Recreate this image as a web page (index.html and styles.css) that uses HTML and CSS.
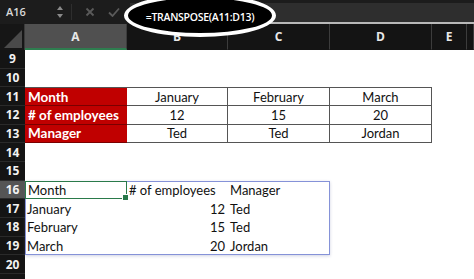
FILE: index.html
```html
<!DOCTYPE html>
<html lang="en">
<head>
    <meta charset="UTF-8">
    <title>TRANSPOSE</title>
    <link rel="stylesheet" href="styles.css">
</head>
<body>

<div class="toolbar">
    <div class="namebox">A16</div>
    <div class="stepper">
        <svg width="8" height="14" viewBox="0 0 8 14"><path d="M1 5 L4 1 L7 5 Z M1 9 L4 13 L7 9 Z" fill="#8a8a8a"/></svg>
    </div>
    <div class="sep"></div>
    <div class="tool-icon">
        <svg width="10" height="10" viewBox="0 0 10 10"><path d="M1.5 1.5 L8.5 8.5 M8.5 1.5 L1.5 8.5" stroke="#5a5a5a" stroke-width="1.8"/></svg>
    </div>
    <div class="tool-icon">
        <svg width="12" height="10" viewBox="0 0 12 10"><path d="M1 5.5 L4.5 9 L11 1.5" stroke="#5a5a5a" stroke-width="1.8" fill="none"/></svg>
    </div>
    <div class="formula">
        <div class="ellipse">=TRANSPOSE(A11:D13)</div>
    </div>
</div>

<div class="sheet">
    <div class="corner"><div class="tri"></div></div>
    <div class="colhead active">A</div>
    <div class="colhead">B</div>
    <div class="colhead">C</div>
    <div class="colhead">D</div>
    <div class="colhead">E</div>
    <div class="colhead"></div>

    <div class="rowhead" style="grid-row: 2">9</div>
    <div class="rowhead" style="grid-row: 3">10</div>
    <div class="rowhead" style="grid-row: 4">11</div>
    <div class="rowhead" style="grid-row: 5">12</div>
    <div class="rowhead" style="grid-row: 6">13</div>
    <div class="rowhead" style="grid-row: 7">14</div>
    <div class="rowhead" style="grid-row: 8">15</div>
    <div class="rowhead active" style="grid-row: 9">16</div>
    <div class="rowhead" style="grid-row: 10">17</div>
    <div class="rowhead" style="grid-row: 11">18</div>
    <div class="rowhead" style="grid-row: 12">19</div>
    <div class="rowhead" style="grid-row: 13">20</div>
    <div class="rowhead" style="grid-row: 14"></div>

    <!-- source table -->
    <div class="cell red top" style="grid-row: 4; grid-column: 2">Month</div>
    <div class="cell boxed top" style="grid-row: 4; grid-column: 3">January</div>
    <div class="cell boxed top" style="grid-row: 4; grid-column: 4">February</div>
    <div class="cell boxed top" style="grid-row: 4; grid-column: 5">March</div>

    <div class="cell red" style="grid-row: 5; grid-column: 2"># of employees</div>
    <div class="cell boxed" style="grid-row: 5; grid-column: 3">12</div>
    <div class="cell boxed" style="grid-row: 5; grid-column: 4">15</div>
    <div class="cell boxed" style="grid-row: 5; grid-column: 5">20</div>

    <div class="cell red" style="grid-row: 6; grid-column: 2">Manager</div>
    <div class="cell boxed" style="grid-row: 6; grid-column: 3">Ted</div>
    <div class="cell boxed" style="grid-row: 6; grid-column: 4">Ted</div>
    <div class="cell boxed" style="grid-row: 6; grid-column: 5">Jordan</div>

    <!-- transposed result -->
    <div class="spill" style="grid-row: 9 / 13; grid-column: 2 / 5"></div>
    <div class="cell plain selected" style="grid-row: 9; grid-column: 2">Month<span class="handle"></span></div>
    <div class="cell plain" style="grid-row: 9; grid-column: 3"># of employees</div>
    <div class="cell plain" style="grid-row: 9; grid-column: 4">Manager</div>

    <div class="cell plain" style="grid-row: 10; grid-column: 2">January</div>
    <div class="cell plain num" style="grid-row: 10; grid-column: 3">12</div>
    <div class="cell plain" style="grid-row: 10; grid-column: 4">Ted</div>

    <div class="cell plain" style="grid-row: 11; grid-column: 2">February</div>
    <div class="cell plain num" style="grid-row: 11; grid-column: 3">15</div>
    <div class="cell plain" style="grid-row: 11; grid-column: 4">Ted</div>

    <div class="cell plain" style="grid-row: 12; grid-column: 2">March</div>
    <div class="cell plain num" style="grid-row: 12; grid-column: 3">20</div>
    <div class="cell plain" style="grid-row: 12; grid-column: 4">Jordan</div>
</div>

</body>
</html>
```

FILE: styles.css
```css
body {
    margin: 0;
    padding: 0;
    width: 474px;
    height: 279px;
    overflow: hidden;
    background: #ffffff;
    font-family: Lato, "Open Sans", sans-serif;
}
.toolbar {
    height: 24px;
    background: #1c1c1c;
    display: flex;
    align-items: stretch;
    position: relative;
}
.namebox {
    width: 50px;
    padding-left: 6px;
    color: #d8d8d8;
    font-family: "Open Sans", sans-serif;
    font-size: 11px;
    font-weight: 600;
    line-height: 24px;
}
.stepper {
    width: 12px;
    display: flex;
    align-items: center;
}
.sep {
    width: 1px;
    margin: 4px 6px 4px 3px;
    background: #2e2e2e;
}
.tool-icon {
    width: 24px;
    display: flex;
    align-items: center;
    justify-content: center;
}
.formula {
    flex: 1;
    margin-left: 4px;
    margin-top: 3px;
    background: #2e2e2e;
    border-bottom: 2px solid #b8b8b8;
    position: relative;
}
.ellipse {
    position: absolute;
    left: -6px;
    top: -9px;
    width: 144px;
    height: 31px;
    border: 4px solid #ffffff;
    border-radius: 50%;
    background: #000000;
    color: #ffffff;
    font-family: "Open Sans", sans-serif;
    font-size: 10.5px;
    font-weight: 600;
    letter-spacing: -0.3px;
    line-height: 30px;
    padding-top: 4px;
    text-align: center;
}
.sheet {
    display: grid;
    grid-template-columns: 25px 102px 101px 102px 102px 35px 1fr;
    grid-template-rows: 26px;
    grid-auto-rows: 18.67px;
    font-size: 13px;
}
.corner {
    grid-row: 1;
    background: #161616;
    border-right: 1px solid #3a3a3a;
    position: relative;
    overflow: hidden;
}
.tri {
    position: absolute;
    right: 2px;
    bottom: 2px;
    width: 0;
    height: 0;
    border-left: 18px solid transparent;
    border-bottom: 18px solid #4a4a4a;
}
.colhead {
    grid-row: 1;
    background: #141414;
    color: #e8e8e8;
    font-family: "Open Sans", sans-serif;
    font-size: 12px;
    font-weight: 700;
    display: flex;
    align-items: center;
    justify-content: center;
    border-right: 1px solid #3c3c3c;
    border-bottom: 1px solid #141414;
}
.colhead.active {
    background: #505050;
    border-bottom: 2px solid #2e7d4f;
}
.rowhead {
    grid-column: 1;
    background: #141414;
    color: #f2f2f2;
    font-family: "Open Sans", sans-serif;
    font-size: 12px;
    font-weight: 700;
    display: flex;
    align-items: center;
    justify-content: center;
    border-bottom: 1px solid #2a2a2a;
}
.rowhead.active {
    background: #555555;
}
.cell {
    display: flex;
    align-items: center;
    padding: 0 3px;
    white-space: nowrap;
    color: #111111;
    box-sizing: border-box;
}
.red {
    background: #c00000;
    color: #ffffff;
    font-weight: 700;
    font-size: 13.5px;
    border-bottom: 1px solid #7a0000;
}
.boxed {
    justify-content: center;
    border-right: 1px solid #555555;
    border-bottom: 1px solid #555555;
}
.top {
    border-top: 1px solid #555555;
}
.plain {
    padding-left: 2px;
}
.num {
    justify-content: flex-end;
}
.spill {
    border: 1px solid #8592d8;
    box-shadow: 0 1px 3px rgba(100, 110, 160, 0.3);
}
.selected {
    border: 1px solid #2a7a4a;
    position: relative;
}
.handle {
    position: absolute;
    right: -3px;
    bottom: -3px;
    width: 5px;
    height: 5px;
    background: #2a7a4a;
    border: 1px solid #ffffff;
}
```
